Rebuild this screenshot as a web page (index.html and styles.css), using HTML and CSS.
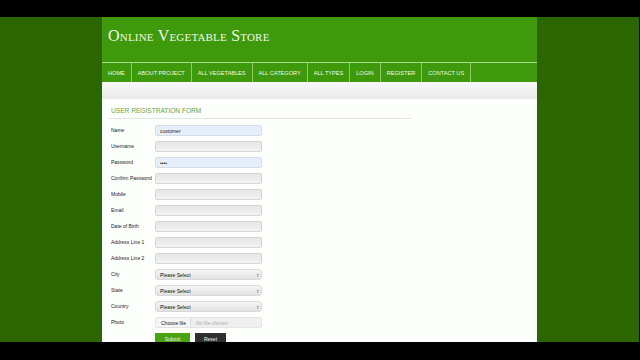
FILE: index.html
```html
<!DOCTYPE html>
<html>
<head>
<meta charset="utf-8">
<link rel="stylesheet" href="styles.css">
</head>
<body>
<div class="stage">
  <div class="site">
    <header class="masthead">
      <h1 class="logo">Online Vegetable Store</h1>
    </header>
    <nav class="menu">
      <a class="menu-item">HOME</a>
      <a class="menu-item">ABOUT PROJECT</a>
      <a class="menu-item">ALL VEGETABLES</a>
      <a class="menu-item">ALL CATEGORY</a>
      <a class="menu-item">ALL TYPES</a>
      <a class="menu-item">LOGIN</a>
      <a class="menu-item">REGISTER</a>
      <a class="menu-item">CONTACT US</a>
    </nav>
    <div class="band"></div>
    <main class="content">
      <h2 class="form-title">USER REGISTRATION FORM</h2>
      <form class="form">
        <div class="row"><label class="lbl">Name</label><input class="field auto" value="customer"></div>
        <div class="row"><label class="lbl">Username</label><input class="field"></div>
        <div class="row"><label class="lbl">Password</label><input class="field auto" type="password" value="abcd"></div>
        <div class="row"><label class="lbl">Confirm Password</label><input class="field" type="password"></div>
        <div class="row"><label class="lbl">Mobile</label><input class="field"></div>
        <div class="row"><label class="lbl">Email</label><input class="field"></div>
        <div class="row"><label class="lbl">Date of Birth</label><input class="field"></div>
        <div class="row"><label class="lbl">Address Line 1</label><input class="field"></div>
        <div class="row"><label class="lbl">Address Line 2</label><input class="field"></div>
        <div class="row"><label class="lbl">City</label><div class="select"><span>Please Select</span><span class="arrows">&#x2195;</span></div></div>
        <div class="row"><label class="lbl">State</label><div class="select"><span>Please Select</span><span class="arrows">&#x2195;</span></div></div>
        <div class="row"><label class="lbl">Country</label><div class="select"><span>Please Select</span><span class="arrows">&#x2195;</span></div></div>
        <div class="row"><label class="lbl">Photo</label><div class="file"><span class="file-btn">Choose file</span><span class="file-txt">No file chosen</span></div></div>
        <div class="row buttons"><span class="lbl"></span><span class="btn submit">Submit</span><span class="btn reset">Reset</span></div>
      </form>
    </main>
  </div>
</div>
</body>
</html>
```

FILE: styles.css
```css
* { box-sizing: border-box; }
html, body { margin: 0; padding: 0; background: #000; height: 360px; overflow: hidden; }
.stage {
  margin-top: 17px;
  width: 639px;
  height: 325px;
  background: #2b6601;
  overflow: hidden;
}
.site {
  width: 435px;
  margin: 0 0 0 102px;
  height: 325px;
  background: #fdfffc;
  display: flex;
  flex-direction: column;
}
.masthead {
  height: 45px;
  flex: none;
  background: #3f9a0b;
  padding: 10px 0 0 6px;
}
.logo {
  margin: 0;
  font-family: "Liberation Serif", "DejaVu Serif", serif;
  font-variant: small-caps;
  font-weight: normal;
  font-size: 16px;
  letter-spacing: 0.2px;
  color: #f2f8ea;
}
.menu {
  height: 20px;
  flex: none;
  background: #3f9a0b;
  border-top: 1px solid #a6dc84;
  display: flex;
}
.menu-item {
  font-family: "Liberation Sans", Arial, sans-serif;
  font-size: 5.6px;
  color: #eef8e6;
  display: flex;
  align-items: center;
  padding: 0 6px;
  border-right: 1px solid #8fcb68;
  white-space: nowrap;
}
.band {
  height: 17px;
  flex: none;
  background: linear-gradient(#f7f7f7, #e9e9e9);
}
.content {
  flex: 1;
  padding: 7px 0 0 6px;
  font-family: "Liberation Sans", Arial, sans-serif;
}
.form-title {
  margin: 0;
  width: 303px;
  font-size: 6.6px;
  font-weight: normal;
  color: #6aa443;
  padding: 1px 0 4px 3px;
  border-bottom: 1px solid #e3e6e0;
}
.form {
  margin: 6px 0 0 3px;
}
.row {
  display: flex;
  align-items: flex-start;
  height: 16px;
}
.lbl {
  width: 44px;
  flex: none;
  font-size: 5px;
  color: #222;
  padding-top: 2px;
  white-space: nowrap;
}
.field {
  width: 107px;
  height: 11px;
  margin: 0;
  border: 1px solid #d6d6d6;
  border-radius: 2px;
  background: linear-gradient(#e6e6e6, #f2f2f2);
  font-family: "Liberation Sans", Arial, sans-serif;
  font-size: 5px;
  color: #222;
  padding: 0 4px;
  outline: none;
}
.field.auto {
  background: #e6eef9;
  border-color: #d6dde6;
}
.select {
  width: 107px;
  height: 11px;
  border: 1px solid #d8d8d8;
  border-radius: 3px;
  background: linear-gradient(#f5f5f5, #e2e2e2);
  font-size: 5px;
  color: #111;
  display: flex;
  justify-content: space-between;
  align-items: center;
  padding: 0 2px 0 4px;
}
.arrows { font-size: 5px; font-weight: bold; }
.file {
  width: 107px;
  height: 11px;
  background: #efefef;
  border: 1px solid #e4e4e4;
  border-radius: 2px;
  display: flex;
  align-items: center;
  font-size: 5px;
}
.file-btn {
  color: #222;
  padding: 0 4px 0 5px;
  border-right: 1px solid #dcdcdc;
  height: 100%;
  display: flex;
  align-items: center;
  background: #f5f5f5;
}
.file-txt { color: #aaa; padding-left: 5px; }
.buttons { height: auto; }
.btn {
  height: 12px;
  font-size: 5px;
  color: #f3f3f3;
  display: flex;
  align-items: center;
  justify-content: center;
}
.submit { width: 35px; background: #48a315; margin-right: 5px; }
.reset { width: 31px; background: #2f2f2f; }
```
